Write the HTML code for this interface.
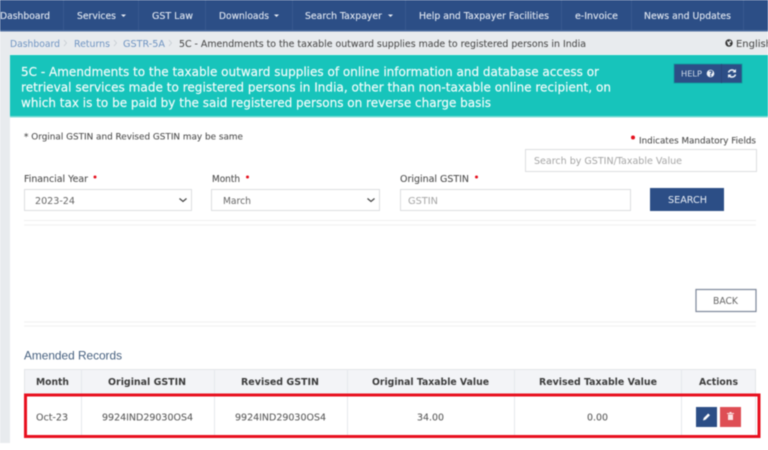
<!DOCTYPE html>
<html>
<head>
<meta charset="utf-8">
<style>
html,body{margin:0;padding:0;width:768px;height:450px;overflow:hidden;background:#fff}
svg{display:block;filter:blur(.5px)}
text{font-family:"DejaVu Sans","Liberation Sans",sans-serif;font-size:10px;white-space:pre}
.n{fill:#e2e8f2;stroke:#e2e8f2;stroke-width:.12}
.b{fill:#6f94c2}
.h{fill:#3c3c3c;font-weight:bold;font-size:9.5px}
.c{fill:#5c5c5c;stroke:#5c5c5c;stroke-width:.1}
.t{fill:#f6fdfc;font-size:12.5px;stroke:#f6fdfc;stroke-width:.15}
.l{fill:#4c4c4c;stroke:#4c4c4c;stroke-width:.08}
</style>
</head>
<body>
<svg width="768" height="450" viewBox="0 0 768 450" xmlns="http://www.w3.org/2000/svg">
<rect width="768" height="450" fill="#fff"/>
<!-- nav -->
<rect width="768" height="31" fill="#2c4e86"/>
<rect y="30" width="768" height="1.500" fill="#4a6a9c"/>
<g fill="#38598f">
<rect x="63" width="1" height="30"/><rect x="138" width="1" height="30"/><rect x="205" width="1" height="30"/><rect x="292" width="1" height="30"/><rect x="405" width="1" height="30"/><rect x="561" width="1" height="30"/><rect x="631" width="1" height="30"/><rect x="743" width="1" height="30"/>
</g>
<text class="n" x="0" y="19" textLength="50" lengthAdjust="spacingAndGlyphs">Dashboard</text>
<text class="n" x="77" y="19" textLength="39" lengthAdjust="spacingAndGlyphs">Services</text>
<text class="n" x="152" y="19" textLength="41" lengthAdjust="spacingAndGlyphs">GST Law</text>
<text class="n" x="219" y="19" textLength="50" lengthAdjust="spacingAndGlyphs">Downloads</text>
<text class="n" x="305" y="19" textLength="77" lengthAdjust="spacingAndGlyphs">Search Taxpayer</text>
<text class="n" x="419" y="19" textLength="130" lengthAdjust="spacingAndGlyphs">Help and Taxpayer Facilities</text>
<text class="n" x="575" y="19" textLength="43" lengthAdjust="spacingAndGlyphs">e-Invoice</text>
<text class="n" x="644" y="19" textLength="87" lengthAdjust="spacingAndGlyphs">News and Updates</text>
<path d="M121 14.500h5l-2.500 2.500zM274 14.500h5l-2.500 2.500zM388 14.500h5l-2.500 2.500z" fill="#e6ebf3"/>
<!-- breadcrumb -->
<rect y="31.500" width="768" height="23" fill="#e8ebee"/>
<rect x="0" y="54" width="10" height="389" fill="#e8ebee"/>
<text class="b" x="10" y="47" textLength="50" lengthAdjust="spacingAndGlyphs">Dashboard</text>
<text class="b" x="74" y="47" textLength="36" lengthAdjust="spacingAndGlyphs">Returns</text>
<text class="b" x="123" y="47" textLength="42" lengthAdjust="spacingAndGlyphs">GSTR-5A</text>
<path d="M64 40l2.500 3-2.500 3M114 40l2.500 3-2.500 3M169 40l2.500 3-2.500 3" fill="none" stroke="#c6ccd3" stroke-width=".8"/>
<text class="l" x="179" y="47" textLength="407" lengthAdjust="spacingAndGlyphs">5C - Amendments to the taxable outward supplies made to registered persons in India</text>
<circle cx="729" cy="43" r="3.700" fill="#333"/>
<path d="M727 41l2 1 1-2 1.500 2-2 1 1 2-2 .5-1-2z" fill="#e8ebee"/>
<text class="l" x="736" y="47" textLength="36" lengthAdjust="spacingAndGlyphs">English</text>
<!-- teal -->
<rect x="10" y="55" width="758" height="62" fill="#17c4bb"/>
<rect x="10" y="116" width="758" height="1.500" fill="#7fdcd6"/>
<text class="t" x="21" y="76" textLength="578" lengthAdjust="spacingAndGlyphs">5C - Amendments to the taxable outward supplies of online information and database access or</text>
<text class="t" x="21" y="91.500" textLength="590" lengthAdjust="spacingAndGlyphs">retrieval services made to registered persons in India, other than non-taxable online recipient, on</text>
<text class="t" x="21" y="107" textLength="470" lengthAdjust="spacingAndGlyphs">which tax is to be paid by the said registered persons on reverse charge basis</text>
<!-- help -->
<rect x="674" y="64" width="68" height="19" fill="#2c4e86" stroke="#139a9f" stroke-width=".8"/>
<rect x="721" y="64" width="1" height="19" fill="#284679"/>
<text fill="#d3dcea" x="681" y="76.500" style="font-size:8px" textLength="21" lengthAdjust="spacingAndGlyphs">HELP</text>
<circle cx="710.500" cy="73.500" r="3.800" fill="#eef2f8"/>
<text fill="#2c4e86" x="708.700" y="76.300" style="font-size:7.500px;font-weight:bold">?</text>
<path d="M728.500 72.500a3.700 3.700 0 0 1 6.500-1M735.500 74.500a3.700 3.700 0 0 1-6.500 1" fill="none" stroke="#eef2f8" stroke-width="1.500"/>
<path d="M736 69v3.500h-3.500zM728 78v-3.500h3.500z" fill="#eef2f8"/>
<!-- notes -->
<text class="l" x="24" y="139.500" style="font-size:9px" textLength="219" lengthAdjust="spacingAndGlyphs">* Orginal GSTIN and Revised GSTIN may be same</text>
<circle cx="633" cy="137.500" r="2" fill="#e5101d"/>
<text class="l" x="639" y="143.500" style="font-size:9px" textLength="117" lengthAdjust="spacingAndGlyphs">Indicates Mandatory Fields</text>
<rect x="525.500" y="149.500" width="231" height="22" fill="#fff" stroke="#dcdee1"/>
<text fill="#a5a5a5" x="534" y="164" textLength="148" lengthAdjust="spacingAndGlyphs">Search by GSTIN/Taxable Value</text>
<!-- labels -->
<text class="l" x="24" y="182" textLength="64" lengthAdjust="spacingAndGlyphs">Financial Year</text>
<text class="l" x="212" y="182" textLength="28" lengthAdjust="spacingAndGlyphs">Month</text>
<text class="l" x="400" y="182" textLength="69" lengthAdjust="spacingAndGlyphs">Original GSTIN</text>
<g fill="#e5101d"><circle cx="95" cy="177" r="1.500"/><circle cx="247.500" cy="177" r="1.500"/><circle cx="476.500" cy="177" r="1.500"/></g>
<!-- fields -->
<g fill="#fff" stroke="#dcdee1">
<rect x="24.500" y="189.500" width="167" height="21"/>
<rect x="211.500" y="189.500" width="168" height="21"/>
<rect x="400.500" y="189.500" width="230" height="21"/>
</g>
<text fill="#666" x="35" y="204" textLength="40" lengthAdjust="spacingAndGlyphs">2023-24</text>
<text fill="#666" x="223" y="204" textLength="28" lengthAdjust="spacingAndGlyphs">March</text>
<text fill="#a5a5a5" x="408" y="204" textLength="30" lengthAdjust="spacingAndGlyphs">GSTIN</text>
<path d="M179.500 198.500l3.500 3 3.500-3M367.500 198.500l3.500 3 3.500-3" fill="none" stroke="#444" stroke-width="1.200"/>
<rect x="650" y="188" width="74" height="23" fill="#2c4e86"/>
<text fill="#e8edf5" x="668" y="203" textLength="39" lengthAdjust="spacingAndGlyphs">SEARCH</text>
<!-- hr -->
<g fill="#f0f0f0">
<rect x="24" y="220" width="732" height="1"/><rect x="24" y="224.500" width="732" height="1"/>
<rect x="24" y="321.500" width="732" height="1"/><rect x="24" y="325.500" width="732" height="1"/>
</g>
<!-- back -->
<rect x="696" y="289.500" width="60" height="22" fill="#fff" stroke="#7d8799" stroke-width="1.200"/>
<text fill="#666" x="713" y="304" textLength="25" lengthAdjust="spacingAndGlyphs">BACK</text>
<!-- amended -->
<text fill="#46607f" x="24" y="359.500" style="font-family:'Liberation Sans',sans-serif;font-size:12px" textLength="98" lengthAdjust="spacingAndGlyphs">Amended Records</text>
<!-- table -->
<rect x="24" y="369" width="732" height="26" fill="#f3f4f7"/>
<rect x="24.500" y="369.500" width="731" height="68" fill="none" stroke="#e3e5e9"/>
<g fill="#e6e8ec">
<rect x="81" y="369" width="1" height="69"/><rect x="214" y="369" width="1" height="69"/><rect x="347" y="369" width="1" height="69"/><rect x="514" y="369" width="1" height="69"/><rect x="681" y="369" width="1" height="69"/>
</g>
<text class="h" x="36" y="385" textLength="33" lengthAdjust="spacingAndGlyphs">Month</text>
<text class="h" x="108" y="385" textLength="78" lengthAdjust="spacingAndGlyphs">Original GSTIN</text>
<text class="h" x="241" y="385" textLength="78" lengthAdjust="spacingAndGlyphs">Revised GSTIN</text>
<text class="h" x="372" y="385" textLength="117" lengthAdjust="spacingAndGlyphs">Original Taxable Value</text>
<text class="h" x="539" y="385" textLength="118" lengthAdjust="spacingAndGlyphs">Revised Taxable Value</text>
<text class="h" x="699" y="385" textLength="39" lengthAdjust="spacingAndGlyphs">Actions</text>
<text class="c" x="36" y="420.500" textLength="32" lengthAdjust="spacingAndGlyphs">Oct-23</text>
<text class="c" x="102" y="420.500" textLength="91" lengthAdjust="spacingAndGlyphs">9924IND29030OS4</text>
<text class="c" x="235" y="420.500" textLength="91" lengthAdjust="spacingAndGlyphs">9924IND29030OS4</text>
<text class="c" x="417" y="420.500" textLength="27" lengthAdjust="spacingAndGlyphs">34.00</text>
<text class="c" x="587" y="420.500" textLength="21" lengthAdjust="spacingAndGlyphs">0.00</text>
<!-- actions -->
<rect x="696" y="407" width="21" height="20" fill="#2c4e86"/>
<path d="M703 420.500l.7-2.500 4.500-4.500 1.800 1.800-4.500 4.500z" fill="#fff"/>
<rect x="720" y="407" width="21" height="20" fill="#de4e54"/>
<path d="M727 413h7v1h-7zM728 414.500h5v5.500h-5zM729.500 412h2v1h-2z" fill="#fbe3e3"/>
<!-- red outline -->
<rect x="25.500" y="395" width="733.500" height="41.500" fill="none" stroke="#e8101f" stroke-width="3"/>
</svg>
</body>
</html>
